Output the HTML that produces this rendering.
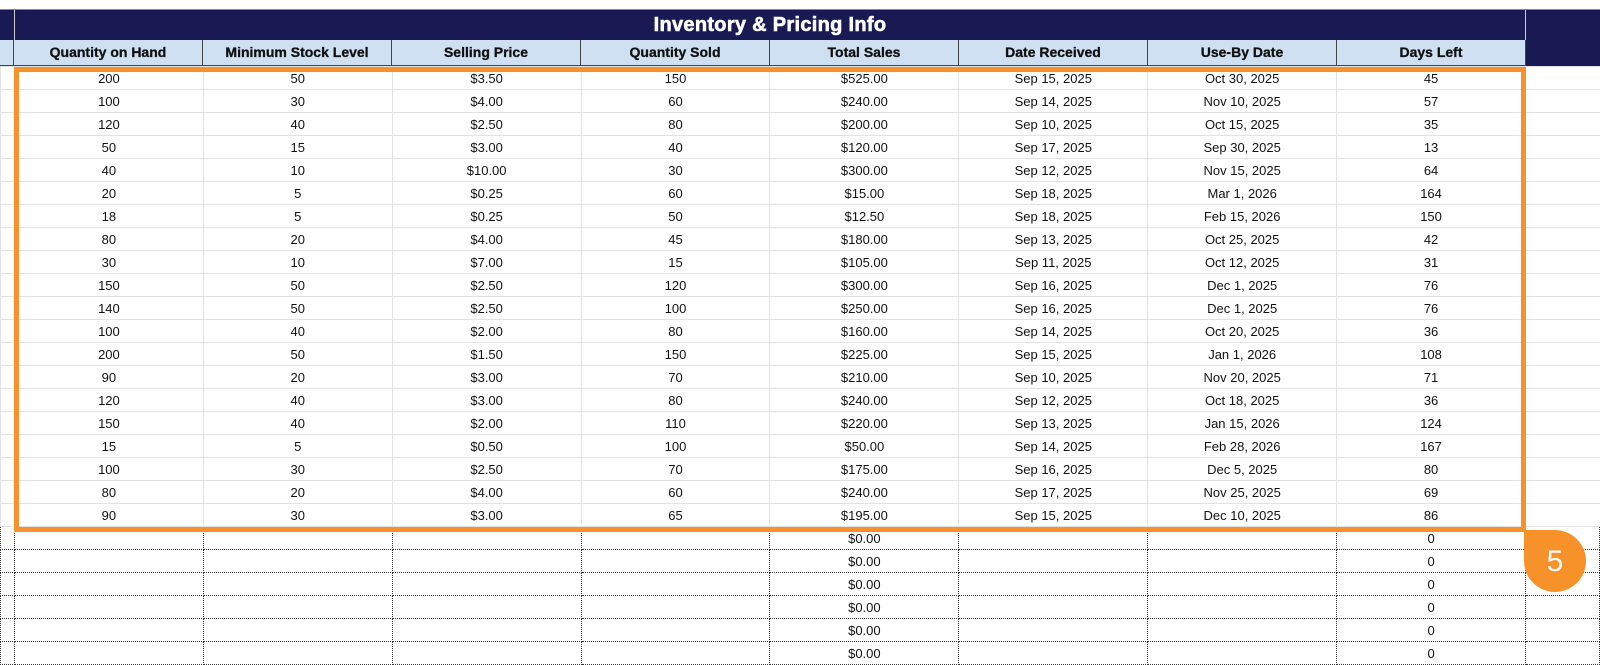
<!DOCTYPE html>
<html><head><meta charset="utf-8"><style>
*{margin:0;padding:0;box-sizing:border-box}
body{width:1600px;height:664px;overflow:hidden;background:#fff;font-family:"Liberation Sans",Arial,sans-serif;position:relative}
.top{position:absolute;left:0;top:9px;width:1600px;height:31px;background:#191a54;border-top:1px solid #888}
.top .t{position:absolute;left:14px;width:1512px;top:0;height:30px;line-height:30px;text-align:center;color:#fff;font-weight:bold;font-size:20px;-webkit-text-stroke:0.6px #fff;letter-spacing:0.3px;border-left:1px solid #ccc;border-right:1px solid #ccc}
.hdr{position:absolute;left:0;top:40px;height:26px;width:1600px;background:#191a54}
.h{position:absolute;top:0;height:26px;line-height:25px;background:#cfe0f2;border-right:1px solid #444;border-bottom:1px solid #444;text-align:center;font-weight:bold;font-size:14px;-webkit-text-stroke:0.3px #111;color:#111}
table{position:absolute;left:0;top:66px;border-collapse:collapse;table-layout:fixed}
td{height:23px;border:1px solid #e2e2e2;text-align:center;font-size:13px;color:#111;padding:0;line-height:21px;white-space:nowrap}
tr.e td{border:1px dotted #333;border-top:none}
td.x{border-right:none}
.box{position:absolute;left:14px;top:67px;width:1512px;height:465px;border:5px solid #f7922b}
.bub{position:absolute;left:1524px;top:530px;width:62px;height:62px;background:#f7922b;border-radius:0 50% 50% 50%;color:#fff;font-size:30px;line-height:64px;text-align:center}
</style></head><body>
<div class="top"><div class="t">Inventory &amp; Pricing Info</div></div>
<div class="hdr">
<div class="h" style="left:0;width:14px"></div>
<div class="h" style="left:14px;width:189px">Quantity on Hand</div>
<div class="h" style="left:203px;width:189px">Minimum Stock Level</div>
<div class="h" style="left:392px;width:189px">Selling Price</div>
<div class="h" style="left:581px;width:189px">Quantity Sold</div>
<div class="h" style="left:770px;width:189px">Total Sales</div>
<div class="h" style="left:959px;width:189px">Date Received</div>
<div class="h" style="left:1148px;width:189px">Use-By Date</div>
<div class="h" style="left:1337px;width:189px">Days Left</div>
</div>
<table>
<colgroup><col style="width:14px"><col style="width:189px"><col style="width:189px"><col style="width:189px"><col style="width:189px"><col style="width:189px"><col style="width:189px"><col style="width:189px"><col style="width:189px"><col style="width:74px"></colgroup>
<tr><td></td><td>200</td><td>50</td><td>$3.50</td><td>150</td><td>$525.00</td><td>Sep 15, 2025</td><td>Oct 30, 2025</td><td>45</td><td class="x"></td></tr>
<tr><td></td><td>100</td><td>30</td><td>$4.00</td><td>60</td><td>$240.00</td><td>Sep 14, 2025</td><td>Nov 10, 2025</td><td>57</td><td class="x"></td></tr>
<tr><td></td><td>120</td><td>40</td><td>$2.50</td><td>80</td><td>$200.00</td><td>Sep 10, 2025</td><td>Oct 15, 2025</td><td>35</td><td class="x"></td></tr>
<tr><td></td><td>50</td><td>15</td><td>$3.00</td><td>40</td><td>$120.00</td><td>Sep 17, 2025</td><td>Sep 30, 2025</td><td>13</td><td class="x"></td></tr>
<tr><td></td><td>40</td><td>10</td><td>$10.00</td><td>30</td><td>$300.00</td><td>Sep 12, 2025</td><td>Nov 15, 2025</td><td>64</td><td class="x"></td></tr>
<tr><td></td><td>20</td><td>5</td><td>$0.25</td><td>60</td><td>$15.00</td><td>Sep 18, 2025</td><td>Mar 1, 2026</td><td>164</td><td class="x"></td></tr>
<tr><td></td><td>18</td><td>5</td><td>$0.25</td><td>50</td><td>$12.50</td><td>Sep 18, 2025</td><td>Feb 15, 2026</td><td>150</td><td class="x"></td></tr>
<tr><td></td><td>80</td><td>20</td><td>$4.00</td><td>45</td><td>$180.00</td><td>Sep 13, 2025</td><td>Oct 25, 2025</td><td>42</td><td class="x"></td></tr>
<tr><td></td><td>30</td><td>10</td><td>$7.00</td><td>15</td><td>$105.00</td><td>Sep 11, 2025</td><td>Oct 12, 2025</td><td>31</td><td class="x"></td></tr>
<tr><td></td><td>150</td><td>50</td><td>$2.50</td><td>120</td><td>$300.00</td><td>Sep 16, 2025</td><td>Dec 1, 2025</td><td>76</td><td class="x"></td></tr>
<tr><td></td><td>140</td><td>50</td><td>$2.50</td><td>100</td><td>$250.00</td><td>Sep 16, 2025</td><td>Dec 1, 2025</td><td>76</td><td class="x"></td></tr>
<tr><td></td><td>100</td><td>40</td><td>$2.00</td><td>80</td><td>$160.00</td><td>Sep 14, 2025</td><td>Oct 20, 2025</td><td>36</td><td class="x"></td></tr>
<tr><td></td><td>200</td><td>50</td><td>$1.50</td><td>150</td><td>$225.00</td><td>Sep 15, 2025</td><td>Jan 1, 2026</td><td>108</td><td class="x"></td></tr>
<tr><td></td><td>90</td><td>20</td><td>$3.00</td><td>70</td><td>$210.00</td><td>Sep 10, 2025</td><td>Nov 20, 2025</td><td>71</td><td class="x"></td></tr>
<tr><td></td><td>120</td><td>40</td><td>$3.00</td><td>80</td><td>$240.00</td><td>Sep 12, 2025</td><td>Oct 18, 2025</td><td>36</td><td class="x"></td></tr>
<tr><td></td><td>150</td><td>40</td><td>$2.00</td><td>110</td><td>$220.00</td><td>Sep 13, 2025</td><td>Jan 15, 2026</td><td>124</td><td class="x"></td></tr>
<tr><td></td><td>15</td><td>5</td><td>$0.50</td><td>100</td><td>$50.00</td><td>Sep 14, 2025</td><td>Feb 28, 2026</td><td>167</td><td class="x"></td></tr>
<tr><td></td><td>100</td><td>30</td><td>$2.50</td><td>70</td><td>$175.00</td><td>Sep 16, 2025</td><td>Dec 5, 2025</td><td>80</td><td class="x"></td></tr>
<tr><td></td><td>80</td><td>20</td><td>$4.00</td><td>60</td><td>$240.00</td><td>Sep 17, 2025</td><td>Nov 25, 2025</td><td>69</td><td class="x"></td></tr>
<tr><td></td><td>90</td><td>30</td><td>$3.00</td><td>65</td><td>$195.00</td><td>Sep 15, 2025</td><td>Dec 10, 2025</td><td>86</td><td class="x"></td></tr>
<tr class="e"><td></td><td></td><td></td><td></td><td></td><td>$0.00</td><td></td><td></td><td>0</td><td class="x"></td></tr>
<tr class="e"><td></td><td></td><td></td><td></td><td></td><td>$0.00</td><td></td><td></td><td>0</td><td class="x"></td></tr>
<tr class="e"><td></td><td></td><td></td><td></td><td></td><td>$0.00</td><td></td><td></td><td>0</td><td class="x"></td></tr>
<tr class="e"><td></td><td></td><td></td><td></td><td></td><td>$0.00</td><td></td><td></td><td>0</td><td class="x"></td></tr>
<tr class="e"><td></td><td></td><td></td><td></td><td></td><td>$0.00</td><td></td><td></td><td>0</td><td class="x"></td></tr>
<tr class="e"><td></td><td></td><td></td><td></td><td></td><td>$0.00</td><td></td><td></td><td>0</td><td class="x"></td></tr>
</table>
<div class="box"></div>
<div class="bub">5</div>
</body></html>
